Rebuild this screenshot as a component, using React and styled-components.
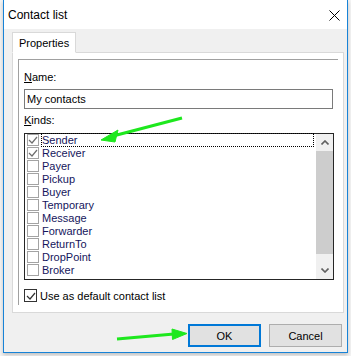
import styled, { createGlobalStyle } from "styled-components";

const GlobalStyle = createGlobalStyle`
  body {
    margin: 0;
    background: #f4f4f4;
    font-family: "Liberation Sans", Arial, sans-serif;
    font-size: 11px;
    color: #000;
  }
`;

const Page = styled.div`
  position: relative;
  width: 351px;
  height: 356px;
  padding-left: 3px;
  box-sizing: border-box;
`;

const Window = styled.div`
  width: 345px;
  height: 353px;
  box-sizing: border-box;
  border: 1px solid #1883d7;
  border-top: none;
  background: #f0f0f0;
  display: flex;
  flex-direction: column;
  box-shadow: 0 2px 4px rgba(0, 0, 0, 0.22);
`;

const TitleBar = styled.div`
  height: 28px;
  background: #fff;
  display: flex;
  align-items: center;
  justify-content: space-between;
  padding: 1px 7px 0 4px;
  font-size: 12px;
`;

const Body = styled.div`
  flex: 1;
  display: flex;
  flex-direction: column;
  padding: 3px 3px 0 4px;
`;

const Tabs = styled.div`
  display: flex;
  padding-left: 4px;
  margin-bottom: -1px;
  position: relative;
  z-index: 1;
`;

const Tab = styled.div`
  width: 64px;
  height: 21px;
  box-sizing: border-box;
  border: 1px solid #d9d9d9;
  border-bottom: 1px solid #fff;
  background: #fff;
  display: flex;
  align-items: center;
  padding-left: 6px;
`;

const Panel = styled.div`
  margin-left: 4px;
  height: 261px;
  box-sizing: border-box;
  border: 1px solid #d9d9d9;
  background: #fff;
  padding: 6px 5px 7px 5px;
  display: flex;
`;

const Frame = styled.div`
  flex: 1;
  border-top: 1px solid #a0a0a0;
  border-left: 1px solid #a0a0a0;
  padding: 11px 5px 0 5px;
  display: flex;
  flex-direction: column;
`;

const Label = styled.div`
  line-height: 13px;
  height: 13px;
  u {
    text-decoration: underline;
  }
`;

const Input = styled.div`
  margin-top: 5px;
  height: 20px;
  box-sizing: border-box;
  border: 1px solid #7a7a7a;
  display: flex;
  align-items: center;
  padding-left: 2px;
  margin-bottom: 5px;
`;

const ListBox = styled.div`
  margin-top: 6px;
  margin-right: -1px;
  height: 147px;
  box-sizing: border-box;
  border: 1px solid #262626;
  display: flex;
`;

const Items = styled.div`
  flex: 1;
  display: flex;
  flex-direction: column;
  padding-left: 2px;
`;

const Row = styled.div`
  height: 13px;
  display: flex;
  align-items: flex-start;
`;

const Box = styled.div`
  width: ${(p) => p.size}px;
  height: ${(p) => p.size}px;
  box-sizing: border-box;
  border: 1px solid ${(p) => p.$border};
  background: #fff;
  display: flex;
  align-items: center;
  justify-content: center;
  flex-shrink: 0;
`;

const ItemText = styled.div`
  flex: 1;
  height: 14px;
  margin: -1px 2px 0 2px;
  box-sizing: border-box;
  border: 1px dotted ${(p) => (p.$focused ? "#000" : "transparent")};
  line-height: 12px;
  color: #15155c;
`;

const ScrollBar = styled.div`
  width: 17px;
  background: #f0f0f0;
  display: flex;
  flex-direction: column;
`;

const ScrollButton = styled.div`
  height: 17px;
  display: flex;
  align-items: center;
  justify-content: center;
`;

const Thumb = styled.div`
  height: 103px;
  background: #cdcdcd;
`;

const Track = styled.div`
  flex: 1;
`;

const DefaultRow = styled.div`
  margin-top: 9px;
  display: flex;
  align-items: center;
  gap: 3px;
`;

const Footer = styled.div`
  display: flex;
  justify-content: flex-end;
  gap: 8px;
  padding: 11px 2px 0 0;
`;

const Button = styled.div`
  width: 73px;
  height: 23px;
  box-sizing: border-box;
  background: #e1e1e1;
  border: ${(p) => (p.$primary ? "2px solid #0078d7" : "1px solid #adadad")};
  display: flex;
  align-items: center;
  justify-content: center;
`;

const Overlay = styled.svg`
  position: absolute;
  left: 0;
  top: 0;
  pointer-events: none;
`;

const kinds = [
  ["Sender", true],
  ["Receiver", true],
  ["Payer", false],
  ["Pickup", false],
  ["Buyer", false],
  ["Temporary", false],
  ["Message", false],
  ["Forwarder", false],
  ["ReturnTo", false],
  ["DropPoint", false],
  ["Broker", false],
];

function Check({ color }) {
  return (
    <svg width="10" height="10" viewBox="0 0 10 10">
      <polyline points="1,5 4,8 9,2" fill="none" stroke={color} strokeWidth="1.2" />
    </svg>
  );
}

function Chevron({ down }) {
  return (
    <svg width="8" height="5" viewBox="0 0 8 5">
      <polyline
        points={down ? "0.5,0.5 4,4 7.5,0.5" : "0.5,4.5 4,1 7.5,4.5"}
        fill="none"
        stroke="#606060"
        strokeWidth="1.6"
      />
    </svg>
  );
}

export default function App() {
  return (
    <>
      <GlobalStyle />
      <Page>
        <Window>
          <TitleBar>
            <span>Contact list</span>
            <svg width="11" height="11" viewBox="0 0 11 11">
              <path d="M0.5 0.5 L10.5 10.5 M10.5 0.5 L0.5 10.5" stroke="#000" strokeWidth="1" />
            </svg>
          </TitleBar>
          <Body>
            <Tabs>
              <Tab>Properties</Tab>
            </Tabs>
            <Panel>
              <Frame>
                <Label>
                  <u>N</u>ame:
                </Label>
                <Input>My contacts</Input>
                <Label>
                  <u>K</u>inds:
                </Label>
                <ListBox>
                  <Items>
                    {kinds.map(([name, checked], i) => (
                      <Row key={name}>
                        <Box size={12} $border="#a3a3a3">
                          {checked && <Check color="#6d6d6d" />}
                        </Box>
                        <ItemText $focused={i === 0}>{name}</ItemText>
                      </Row>
                    ))}
                  </Items>
                  <ScrollBar>
                    <ScrollButton>
                      <Chevron />
                    </ScrollButton>
                    <Thumb />
                    <Track />
                    <ScrollButton>
                      <Chevron down />
                    </ScrollButton>
                  </ScrollBar>
                </ListBox>
                <DefaultRow>
                  <Box size={13} $border="#333">
                    <Check color="#333" />
                  </Box>
                  <span>Use as default contact list</span>
                </DefaultRow>
              </Frame>
            </Panel>
            <Footer>
              <Button $primary>OK</Button>
              <Button>Cancel</Button>
            </Footer>
          </Body>
        </Window>
        <Overlay width="351" height="356" viewBox="0 0 351 356">
          <g fill="#1ee81e" stroke="#1ee81e">
            <line x1="182" y1="118" x2="113" y2="136" strokeWidth="3" />
            <polygon points="101,140 118,130 115,142" strokeWidth="1" />
            <line x1="117" y1="339" x2="174" y2="334" strokeWidth="3" />
            <polygon points="187,333.5 172,329 172.5,339.5" strokeWidth="1" />
          </g>
        </Overlay>
      </Page>
    </>
  );
}
